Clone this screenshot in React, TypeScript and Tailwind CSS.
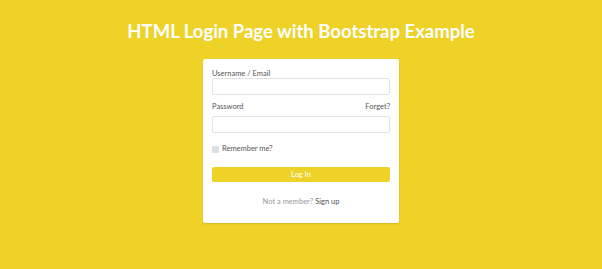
export default function App() {
  return (
    <div className="flex h-[269px] w-full flex-col items-center bg-[#eed228] font-['Lato',sans-serif]">
      <h1 className="mt-[19px] h-[24px] text-[18.5px] font-bold leading-[24px] text-white">
        HTML Login Page with Bootstrap Example
      </h1>

      <div className="mt-[16px] w-[196px] rounded-[2px] bg-white px-[9px] pt-[10px] pb-[16px] shadow-[0_1px_2px_rgba(0,0,0,0.12)]">
        <label className="block text-[7.5px] leading-[9px] text-[#555]">Username / Email</label>
        <div className="h-[17px] rounded-[2px] border border-[#e3e3e3] bg-white" />

        <div className="mt-[7px] flex justify-between text-[7.5px] leading-[9px] text-[#555]">
          <span>Password</span>
          <span>Forget?</span>
        </div>
        <div className="mt-[5px] h-[17px] rounded-[2px] border border-[#e3e3e3] bg-white" />

        <div className="mt-[11px] flex h-[10px] items-center gap-[3px] text-[7.5px] leading-[10px] text-[#555]">
          <span className="h-[7px] w-[7px] rounded-[1px] bg-[#dcdfe4]" />
          <span>Remember me?</span>
        </div>

        <button className="mt-[13px] block h-[15px] w-full rounded-[2px] bg-[#eed228] text-[7.5px] leading-[15px] text-white">
          Log In
        </button>

        <p className="mt-[15px] text-center text-[7.5px] leading-[10px] text-[#999]">
          Not a member? <span className="text-[#555]">Sign up</span>
        </p>
      </div>
    </div>
  );
}
